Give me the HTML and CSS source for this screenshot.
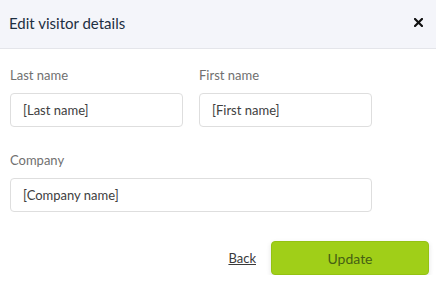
FILE: index.html
```html
<!DOCTYPE html>
<html lang="en">
<head>
    <meta charset="UTF-8">
    <meta name="viewport" content="width=device-width, initial-scale=1.0">
    <title>Edit visitor details</title>
    <link rel="stylesheet" href="styles.css">
</head>
<body>
    <!-- 弹窗：编辑访客信息 -->
    <div class="modal">
        <!-- 标题栏 -->
        <div class="modal-header">
            <span class="modal-title">Edit visitor details</span>
            <svg class="close-btn" width="9" height="9" viewBox="0 0 9 9">
                <path d="M1 1 L8 8 M8 1 L1 8" stroke="#111" stroke-width="2.2" stroke-linecap="square"/>
            </svg>
        </div>
        <!-- 表单内容 -->
        <div class="modal-body">
            <div class="form-row">
                <div class="field">
                    <label class="field-label">Last name</label>
                    <div class="field-input">[Last name]</div>
                </div>
                <div class="field">
                    <label class="field-label">First name</label>
                    <div class="field-input">[First name]</div>
                </div>
            </div>
            <div class="form-row">
                <div class="field field-wide">
                    <label class="field-label">Company</label>
                    <div class="field-input">[Company name]</div>
                </div>
            </div>
        </div>
        <!-- 操作按钮 -->
        <div class="modal-footer">
            <a class="back-link">Back</a>
            <button class="update-btn">Update</button>
        </div>
    </div>
</body>
</html>
```

FILE: styles.css
```css
/* 编辑访客信息弹窗样式 */
body {
    margin: 0;
    background-color: #fff;
    font-family: Lato, "Open Sans", sans-serif;
}

.modal {
    width: 436px;
}

.modal-header {
    height: 48px;
    background-color: #f4f5fa;
    border-bottom: 1px solid #e4e5ea;
    display: flex;
    align-items: center;
    justify-content: space-between;
    padding: 0 13px 0 9px;
}

.modal-title {
    font-size: 15px;
    color: #1d2f42;
    padding-bottom: 2px;
}

.close-btn {
    display: block;
    margin-bottom: 4px;
}

.modal-body {
    padding: 17px 10px 0 10px;
}

.form-row {
    display: flex;
    gap: 16px;
    margin-bottom: 24px;
}

.field {
    width: 173px;
    display: flex;
    flex-direction: column;
}

.field-wide {
    width: 362px;
}

.field-label {
    font-size: 13px;
    line-height: 18px;
    color: #707070;
    margin-bottom: 9px;
}

.field-input {
    height: 34px;
    box-sizing: border-box;
    border: 1px solid #dedede;
    border-radius: 4px;
    padding: 0 12px;
    display: flex;
    align-items: center;
    font-size: 13px;
    color: #404040;
}

.modal-footer {
    display: flex;
    justify-content: flex-end;
    align-items: center;
    gap: 15px;
    padding: 5px 7px 0 0;
}

.back-link {
    font-size: 13px;
    color: #3a3a3a;
    text-decoration: underline;
}

.update-btn {
    width: 158px;
    height: 34px;
    background-color: #a0cf18;
    border: 1px solid #94c212;
    border-radius: 4px;
    box-shadow: 0 2px 5px rgba(0, 0, 0, 0.12);
    font-family: inherit;
    font-size: 14px;
    color: #456014;
}
```
